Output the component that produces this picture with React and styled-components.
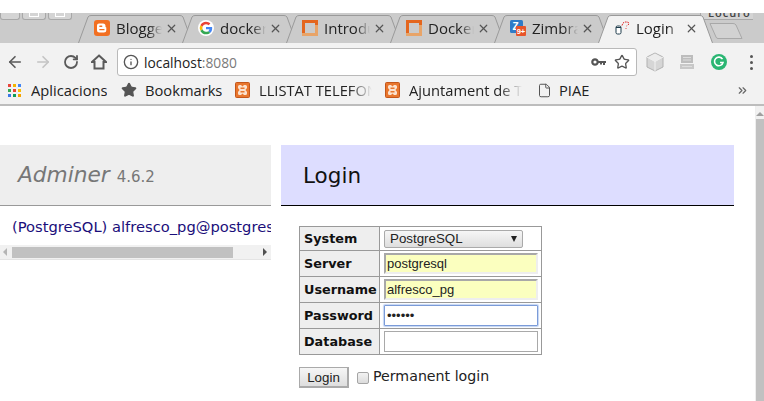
import React from "react";
import styled, { createGlobalStyle } from "styled-components";
import { ArrowLeft, ArrowRight, RotateCw, Info, Star, File, ChevronsRight, X } from "lucide-react";

const Global = createGlobalStyle`
  html, body { margin: 0; padding: 0; background: #fff; overflow: hidden; }
  #root { width: 764px; height: 401px; overflow: hidden; }
  * { box-sizing: border-box; }
`;

const Shell = styled.div`
  width: 764px;
  height: 401px;
  display: flex;
  flex-direction: column;
  overflow: hidden;
  background: #fff;
`;

const TopGap = styled.div`
  height: 13px;
  background: #fff;
  flex: none;
`;

const TabStrip = styled.div`
  height: 30px;
  flex: none;
  background: #cbcbcb;
  display: flex;
  align-items: flex-end;
`;

const WindowButtons = styled.div`
  width: 78px;
  height: 30px;
  flex: none;
  display: flex;
  align-items: flex-start;
  gap: 2px;
`;

const WindowButton = styled.div`
  width: ${(p) => p.$w}px;
  height: 7px;
  border: 1px solid #a8a8a8;
  border-top: none;
  border-radius: 0 0 3px 3px;
  background: #d4d4d4;
  display: flex;
  justify-content: center;
`;

const ButtonMark = styled.div`
  width: 10px;
  height: 4px;
  border: 1px solid #fff;
  border-top: none;
`;

const Tab = styled.div`
  position: relative;
  width: 115px;
  height: 29px;
  flex: none;
  margin-right: -11px;
  padding: 0 0 1px 16px;
  display: flex;
  align-items: center;
  z-index: ${(p) => (p.$active ? 2 : 1)};
`;

const TabShape = styled.svg`
  position: absolute;
  left: 0;
  top: 0;
`;

const TabIcon = styled.svg`
  position: relative;
  width: 16px;
  height: 16px;
  flex: none;
  margin-right: 6px;
`;

const TabTitle = styled.span`
  position: relative;
  width: 46px;
  flex: none;
  overflow: hidden;
  white-space: nowrap;
  font: 15px "Open Sans", sans-serif;
  color: #222;
  -webkit-mask-image: linear-gradient(90deg, #000 70%, transparent 100%);
  mask-image: linear-gradient(90deg, #000 70%, transparent 100%);
`;

const TabClose = styled(X)`
  position: relative;
  margin-left: 3px;
  flex: none;
  color: #555;
`;

const NewTab = styled.svg`
  flex: none;
  margin-left: 7px;
  margin-bottom: 3px;
`;

const CutText = styled.div`
  align-self: flex-start;
  margin-left: -43px;
  width: 53px;
  height: 7px;
  border: 1px solid #a8a8a8;
  border-top: none;
  border-right: none;
  border-radius: 0 0 0 3px;
  background: #d4d4d4;
  overflow: hidden;
  font: 600 11px/0px "Open Sans", sans-serif;
  color: #444;
  padding-left: 7px;
  letter-spacing: 1px;
`;

const Toolbar = styled.div`
  height: 33px;
  flex: none;
  background: #f2f2f2;
  display: flex;
  align-items: center;
  padding-top: 5px;
`;

const NavButton = styled.div`
  width: 28px;
  height: 28px;
  flex: none;
  display: flex;
  align-items: center;
  justify-content: center;
  color: ${(p) => (p.$off ? "#c4c4c4" : "#5a5a5a")};
`;

const NavGroup = styled.div`
  display: flex;
  padding-left: 1px;
  width: 117px;
  flex: none;
`;

const Omnibox = styled.div`
  width: 520px;
  height: 28px;
  flex: none;
  background: #fff;
  border: 1px solid #b9b9b9;
  border-radius: 3px;
  display: flex;
  align-items: center;
  padding: 0 6px 0 5px;
`;

const Url = styled.div`
  flex: 1;
  margin-left: 5px;
  font: 13.8px "Open Sans", sans-serif;
  color: #222;
`;

const Port = styled.span`
  color: #7a7a7a;
`;

const KeyIcon = styled.svg`
  flex: none;
  margin-right: 8px;
`;

const ExtGroup = styled.div`
  display: flex;
  margin-left: 2px;
`;

const ExtSlot = styled.div`
  width: 32px;
  flex: none;
  display: flex;
  justify-content: center;
  align-items: center;
`;

const MenuDots = styled.div`
  display: flex;
  flex-direction: column;
  gap: 3px;
`;

const Dot = styled.div`
  width: 3px;
  height: 3px;
  border-radius: 50%;
  background: #555;
`;

const BookmarkBar = styled.div`
  height: 30px;
  flex: none;
  background: #f2f2f2;
  border-bottom: 2px solid #bdbdbd;
  display: flex;
  align-items: center;
  font: 14.7px "Open Sans", sans-serif;
  color: #222;
  padding-left: 8px;
`;

const Bookmark = styled.div`
  display: flex;
  align-items: center;
  flex: none;
  width: ${(p) => p.$w}px;
`;

const BookmarkLabel = styled.span`
  margin-left: ${(p) => p.$gap || 10}px;
  white-space: nowrap;
  overflow: hidden;
  ${(p) => p.$fade && `
    width: 113px;
    -webkit-mask-image: linear-gradient(90deg, #000 80%, transparent 100%);
    mask-image: linear-gradient(90deg, #000 80%, transparent 100%);
  `}
`;

const AppsGrid = styled.div`
  display: grid;
  grid-template-columns: repeat(3, 3px);
  grid-auto-rows: 3px;
  gap: 2px;
  width: 13px;
  flex: none;
`;

const AppsCell = styled.div`
  background: ${(p) => p.$c};
`;

const MoreMarks = styled(ChevronsRight)`
  margin-left: auto;
  margin-right: 15px;
  color: #666;
`;

const Viewport = styled.div`
  flex: 1;
  min-height: 0;
  display: flex;
  background: #fff;
  font-family: "DejaVu Sans", sans-serif;
`;

const Menu = styled.aside`
  width: 271px;
  flex: none;
  padding-top: 39px;
`;

const LogoBar = styled.h1`
  margin: 0;
  height: 61px;
  background: #eee;
  border-bottom: 1px solid #999;
  padding: 14px 0 0 18px;
  font-size: 21.7px;
  font-weight: normal;
  font-style: italic;
  color: #777;
  line-height: 32px;
  white-space: nowrap;
`;

const Version = styled.span`
  font-size: 15px;
  font-style: normal;
`;

const LoggedAs = styled.div`
  padding: 12px 0 0 12px;
  font-size: 14.7px;
  line-height: 18px;
  color: #1a0e7a;
  white-space: nowrap;
  overflow: hidden;
`;

const HScroll = styled.div`
  margin-top: 9px;
  height: 15px;
  background: #f1f1f1;
  display: flex;
  align-items: center;
  padding: 0 2px;
  border-bottom: 1px solid #e4e4e4;
`;

const HThumb = styled.div`
  width: 221px;
  height: 11px;
  margin-left: 5px;
  background: #c1c1c1;
`;

const Arrow = styled.div`
  width: 0;
  height: 0;
  border-top: 4px solid transparent;
  border-bottom: 4px solid transparent;
  ${(p) =>
    p.$left
      ? `border-right: 4px solid #b5b5b5; margin-left: 1px;`
      : `border-left: 4px solid #505050; margin: 0 2px 0 auto;`}
`;

const Content = styled.main`
  width: 453px;
  flex: none;
  margin-left: 10px;
  padding-top: 39px;
`;

const Heading = styled.h2`
  margin: 0;
  height: 61px;
  background: #ddf;
  border-bottom: 1px solid #000;
  padding: 16px 0 0 22px;
  font-size: 21.5px;
  font-weight: normal;
  line-height: 30px;
  color: #111;
`;

const LoginTable = styled.table`
  margin: 20px 0 0 18px;
  border-collapse: collapse;
  width: 243px;
  border: 1px solid #999;
`;

const Row = styled.tr`
  height: ${(p) => p.$h || 26}px;
`;

const Label = styled.th`
  width: 80px;
  padding: 0 0 0 4px;
  border: 1px solid #999;
  background: #eee;
  font-size: 12.8px;
  text-align: left;
  color: #111;
  line-height: 16px;
`;

const Cell = styled.td`
  padding: 0 3px 0 4px;
  border: 1px solid #999;
`;

const SelectBox = styled.div`
  width: 139px;
  height: 18px;
  border: 1px solid #aaa;
  border-radius: 2px;
  background: linear-gradient(#f6f6f6, #dedede);
  display: flex;
  align-items: center;
  justify-content: space-between;
  padding: 0 5px;
  font: 13.33px "Liberation Sans", sans-serif;
  color: #222;
`;

const Caret = styled.div`
  width: 0;
  height: 0;
  border-left: 3.5px solid transparent;
  border-right: 3.5px solid transparent;
  border-top: 6px solid #222;
`;

const Field = styled.div`
  width: 154px;
  height: 21px;
  display: flex;
  align-items: center;
  padding: 0 1px;
  font: 13px "Liberation Sans", sans-serif;
  color: #222;
  background: ${(p) => (p.$fill ? "#fbffbf" : "#fff")};
  border: ${(p) =>
    p.$fill
      ? "2px solid"
      : p.$focus
      ? "1px solid #7b9bd8"
      : "1px solid #a9a9a9"};
  ${(p) => p.$focus && "box-shadow: 0 0 1px 1px #c4d5f3; border-radius: 1px; padding-left: 2px;"}
  ${(p) => p.$fill && "border-color: #a8a8a8 #eee #eee #a8a8a8;"}
`;

const ActionRow = styled.div`
  margin: 12px 0 0 18px;
  display: flex;
  align-items: center;
`;

const LoginButton = styled.div`
  width: 50px;
  height: 21px;
  border: 1px solid #aaa;
  border-right: 2px solid #aaa;
  border-bottom: 2px solid #aaa;
  background: linear-gradient(#f6f6f6, #dedede);
  display: flex;
  align-items: center;
  justify-content: center;
  font: 13.33px "Liberation Sans", sans-serif;
  color: #222;
`;

const Check = styled.div`
  width: 12px;
  height: 12px;
  margin: 0 4px 0 8px;
  border: 1px solid #a5a5a5;
  border-radius: 2px;
  background: linear-gradient(#f2f2f2, #dcdcdc);
`;

const CheckLabel = styled.span`
  font-size: 14.2px;
  color: #222;
  margin-bottom: 4px;
`;

const VScroll = styled.div`
  width: 9px;
  flex: none;
  margin-left: auto;
  background: #f1f1f1;
  display: flex;
  flex-direction: column;
  align-items: center;
  border-left: 1px solid #eee;
`;

const UpArrow = styled.div`
  margin: 6px 0 3px;
  width: 0;
  height: 0;
  border-left: 4px solid transparent;
  border-right: 4px solid transparent;
  border-bottom: 4px solid #a0a0a0;
`;

const VThumb = styled.div`
  flex: 1;
  width: 100%;
  background: #c1c1c1;
`;

const tabPath = "M0.5 29 L10 3 Q11 1.5 13 1.5 L102 1.5 Q104 1.5 105 3 L114.5 29";

const Blogger = () => (
  <TabIcon viewBox="0 0 16 16">
    <rect width="16" height="16" rx="3" fill="#f26f21" />
    <path d="M5 3.500h4a2.500 2.500 0 0 1 2.500 2.500v1l.8.600V10a2.500 2.500 0 0 1-2.500 2.500H5.500A2.500 2.500 0 0 1 3 10V5.500a2 2 0 0 1 2-2z" fill="#fff" />
    <rect x="5.200" y="5.600" width="3.200" height="1.300" rx=".6" fill="#f26f21" />
    <rect x="5.200" y="9" width="5.400" height="1.300" rx=".6" fill="#f26f21" />
  </TabIcon>
);

const Google = () => (
  <TabIcon viewBox="0 0 48 48">
    <circle cx="24" cy="24" r="24" fill="#fff" />
    <path fill="#ea4335" d="M24 13c3 0 5.600 1 7.600 3l5.600-5.600C33.800 7.200 29.300 5 24 5 16.600 5 10.200 9.300 7.100 15.500l6.500 5C15.100 16.100 19.200 13 24 13z" />
    <path fill="#4285f4" d="M42.500 24.500c0-1.300-.1-2.500-.3-3.700H24v7.200h10.400c-.5 2.400-1.800 4.400-3.800 5.700l6.300 4.900c3.500-3.400 5.600-8.200 5.600-14.100z" />
    <path fill="#fbbc05" d="M13.600 27.500a11.300 11.300 0 0 1 0-7l-6.500-5a19 19 0 0 0 0 17z" />
    <path fill="#34a853" d="M24 43c5.200 0 9.500-1.700 12.900-4.700l-6.300-4.900c-1.700 1.200-3.900 1.900-6.600 1.900-4.800 0-8.900-3.100-10.400-7.500l-6.500 5C10.200 38.700 16.600 43 24 43z" />
  </TabIcon>
);

const Square = () => (
  <TabIcon viewBox="0 0 16 16">
    <path d="M0 0h16v16H0z" fill="#e8a468" />
    <path d="M0 0h16v3H3v10H0z" fill="#e4661e" />
    <rect x="3" y="3" width="10" height="10" fill="#cbcbcb" />
    <path d="M13 3h3v2h-3z" fill="#e4661e" />
  </TabIcon>
);

const Zimbra = () => (
  <TabIcon viewBox="0 0 16 16">
    <rect width="13" height="13" rx="1.500" fill="#2f7bc8" />
    <text x="2.500" y="9.500" fontFamily="Liberation Sans" fontWeight="700" fontSize="10" fill="#fff">Z</text>
    <rect x="6" y="6" width="10" height="10" rx="1" fill="#e8552a" />
    <text x="6.700" y="14" fontFamily="Liberation Sans" fontWeight="700" fontSize="7.500" fill="#fff">9+</text>
  </TabIcon>
);

const LoginFav = () => (
  <TabIcon viewBox="0 0 16 16">
    <rect x="2" y="6" width="5" height="8" rx="1.500" fill="#fff" stroke="#1c3a4a" strokeWidth="1" />
    <path d="M2 7.500h5" stroke="#1c3a4a" strokeWidth="1" />
    <path d="M8 5.500 L9 3 L11 2 L14 2 L15 4 L12.500 6" fill="none" stroke="#e02020" strokeWidth="1" strokeDasharray="1.500 1" />
    <path d="M12 8v.8" stroke="#e02020" strokeWidth="1" />
  </TabIcon>
);

const tabs = [
  { title: "Blogger", icon: <Blogger /> },
  { title: "docker", icon: <Google /> },
  { title: "Introdu", icon: <Square /> },
  { title: "Docker", icon: <Square /> },
  { title: "Zimbra", icon: <Zimbra /> },
  { title: "Login", icon: <LoginFav />, active: true },
];

const apps = ["#e8453c", "#f4b400", "#4285f4", "#34a853", "#ea4335", "#fbbc05", "#3b78e7", "#0f9d58", "#f4a400"];

const Xampp = () => (
  <svg width="15" height="16" viewBox="0 0 15 16" style={{ flex: "none" }}>
    <rect x=".5" y=".5" width="14" height="15" rx="1" fill="#e8762d" stroke="#c4561a" />
    <path d="M3 4.500a1.500 1.500 0 0 1 1.500-1.500H6l1.500 1.500L9 3h1.500A1.500 1.500 0 0 1 12 4.500V6l-1.500 2 1.500 2v1.500a1.500 1.500 0 0 1-1.500 1.500H9l-1.500-1.500L6 13H4.500A1.500 1.500 0 0 1 3 11.500V10l1.500-2L3 6z" fill="#fbe3d0" />
    <rect x="5.500" y="5.500" width="4" height="1.500" fill="#e8762d" />
    <rect x="5.500" y="9" width="4" height="1.500" fill="#e8762d" />
  </svg>
);

const Cube = () => (
  <svg width="18" height="20" viewBox="0 0 18 20">
    <path d="M9 1l8 4v10l-8 4-8-4V5z" fill="#d6d6d6" stroke="#b2b2b2" strokeWidth="1" />
    <path d="M9 9.500l8-4.500M9 9.500L1 5M9 9.500V19" stroke="#f2f2f2" strokeWidth="1" fill="none" />
    <path d="M1.500 5.500L9 9.500 16.500 5.500 9 1.500z" fill="#ececec" />
  </svg>
);

const Printer = () => (
  <svg width="14" height="14" viewBox="0 0 14 14">
    <rect x="1" y="0" width="12" height="8" fill="#bdbdbd" />
    <rect x="0" y="9" width="14" height="5" fill="#c8c8c8" />
    <path d="M3 2.500h8M3 5h8M2 11.500h10" stroke="#dedede" strokeWidth="1" />
  </svg>
);

const Grammarly = () => (
  <svg width="16" height="16" viewBox="0 0 16 16">
    <circle cx="8" cy="8" r="8" fill="#2bb673" />
    <path d="M11.500 5.200A4.300 4.300 0 1 0 12 8.500H9" fill="none" stroke="#fff" strokeWidth="1.600" />
  </svg>
);

const HomeIcon = () => (
  <svg width="16" height="16" viewBox="0 0 16 16">
    <path d="M8 1.500L15 8h-2.500v6.500h-9V8H1z" fill="none" stroke="#5a5a5a" strokeWidth="2" strokeLinejoin="miter" />
  </svg>
);

const Key = () => (
  <KeyIcon width="15" height="9" viewBox="0 0 15 9">
    <circle cx="4" cy="4" r="2.700" fill="none" stroke="#555" strokeWidth="2.200" />
    <path d="M6.500 3h8.500v2h-1v2h-2V5h-1v1.500h-2V5h-2.500z" fill="#555" />
  </KeyIcon>
);

export default function App() {
  return (
    <Shell>
      <Global />
      <TopGap />
      <TabStrip>
        <WindowButtons>
          <WindowButton $w={20} />
          <WindowButton $w={24}>
            <ButtonMark />
          </WindowButton>
          <WindowButton $w={24}>
            <ButtonMark />
          </WindowButton>
        </WindowButtons>
        {tabs.map((t) => (
          <Tab key={t.title} $active={t.active}>
            <TabShape width="115" height="29" viewBox="0 0 115 29">
              <path d={tabPath} fill={t.active ? "#f2f2f2" : "#cbcbcb"} stroke="#9a9a9a" strokeWidth="1" />
            </TabShape>
            {t.icon}
            <TabTitle>{t.title}</TabTitle>
            <TabClose size={13} strokeWidth={2.2} />
          </Tab>
        ))}
        <NewTab width="34" height="18" viewBox="0 0 34 18">
          <path d="M1 1.500 L24 1.500 Q26 1.500 27 3 L33 16.500 L9 16.500 Q7.500 16.500 7 15z" fill="#d2d2d2" stroke="#a8a8a8" />
        </NewTab>
        <CutText>Locuro</CutText>
      </TabStrip>
      <Toolbar>
        <NavGroup>
          <NavButton><ArrowLeft size={18} strokeWidth={2.2} /></NavButton>
          <NavButton $off><ArrowRight size={18} strokeWidth={2.2} /></NavButton>
          <NavButton><RotateCw size={16} strokeWidth={2.7} /></NavButton>
          <NavButton><HomeIcon /></NavButton>
        </NavGroup>
        <Omnibox>
          <Info size={16} color="#555" strokeWidth={2} />
          <Url>localhost<Port>:8080</Port></Url>
          <Key />
          <Star size={16} color="#555" strokeWidth={2} />
        </Omnibox>
        <ExtGroup>
          <ExtSlot><Cube /></ExtSlot>
          <ExtSlot><Printer /></ExtSlot>
          <ExtSlot><Grammarly /></ExtSlot>
          <ExtSlot>
            <MenuDots><Dot /><Dot /><Dot /></MenuDots>
          </ExtSlot>
        </ExtGroup>
      </Toolbar>
      <BookmarkBar>
        <Bookmark $w={113}>
          <AppsGrid>
            {apps.map((c, i) => <AppsCell key={i} $c={c} />)}
          </AppsGrid>
          <BookmarkLabel>Aplicacions</BookmarkLabel>
        </Bookmark>
        <Bookmark $w={114}>
          <Star size={16} color="#555" fill="#555" />
          <BookmarkLabel $gap={8}>Bookmarks</BookmarkLabel>
        </Bookmark>
        <Bookmark $w={150}>
          <Xampp />
          <BookmarkLabel $fade $gap={9}>LLISTAT TELEFON</BookmarkLabel>
        </Bookmark>
        <Bookmark $w={152}>
          <Xampp />
          <BookmarkLabel $fade $gap={9}>Ajuntament de T</BookmarkLabel>
        </Bookmark>
        <Bookmark $w={60}>
          <File size={15} color="#555" strokeWidth={1.6} />
          <BookmarkLabel $gap={7}>PIAE</BookmarkLabel>
        </Bookmark>
        <MoreMarks size={13} strokeWidth={2.2} />
      </BookmarkBar>
      <Viewport>
        <Menu>
          <LogoBar>
            Adminer <Version>4.6.2</Version>
          </LogoBar>
          <LoggedAs>(PostgreSQL) alfresco_pg@postgres</LoggedAs>
          <HScroll>
            <Arrow $left />
            <HThumb />
            <Arrow />
          </HScroll>
        </Menu>
        <Content>
          <Heading>Login</Heading>
          <LoginTable>
            <tbody>
              <Row $h={24}>
                <Label>System</Label>
                <Cell><SelectBox>PostgreSQL<Caret /></SelectBox></Cell>
              </Row>
              <Row>
                <Label>Server</Label>
                <Cell><Field $fill>postgresql</Field></Cell>
              </Row>
              <Row>
                <Label>Username</Label>
                <Cell><Field $fill>alfresco_pg</Field></Cell>
              </Row>
              <Row>
                <Label>Password</Label>
                <Cell><Field $focus>••••••</Field></Cell>
              </Row>
              <Row>
                <Label>Database</Label>
                <Cell><Field /></Cell>
              </Row>
            </tbody>
          </LoginTable>
          <ActionRow>
            <LoginButton>Login</LoginButton>
            <Check />
            <CheckLabel>Permanent login</CheckLabel>
          </ActionRow>
        </Content>
        <VScroll>
          <UpArrow />
          <VThumb />
        </VScroll>
      </Viewport>
    </Shell>
  );
}
